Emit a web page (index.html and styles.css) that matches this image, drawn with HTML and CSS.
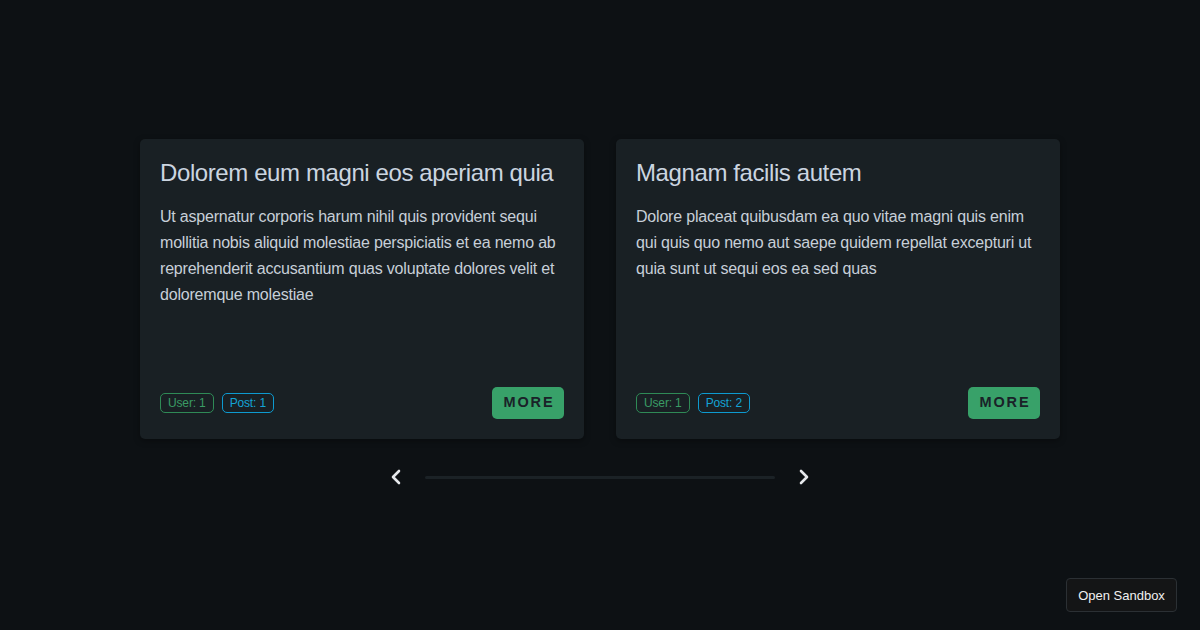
FILE: index.html
```html
<!DOCTYPE html>
<html>
<head>
<meta charset="utf-8">
<link rel="stylesheet" href="styles.css">
</head>
<body>
<main class="page">
  <div class="cards">
    <article class="card">
      <h2 class="card-title">Dolorem eum magni eos aperiam quia</h2>
      <p class="card-body">Ut aspernatur corporis harum nihil quis provident sequi mollitia nobis aliquid molestiae perspiciatis et ea nemo ab reprehenderit accusantium quas voluptate dolores velit et doloremque molestiae</p>
      <div class="card-footer">
        <div class="chips">
          <span class="chip chip-user">User: 1</span>
          <span class="chip chip-post">Post: 1</span>
        </div>
        <button class="more">MORE</button>
      </div>
    </article>
    <article class="card">
      <h2 class="card-title">Magnam facilis autem</h2>
      <p class="card-body">Dolore placeat quibusdam ea quo vitae magni quis enim qui quis quo nemo aut saepe quidem repellat excepturi ut quia sunt ut sequi eos ea sed quas</p>
      <div class="card-footer">
        <div class="chips">
          <span class="chip chip-user">User: 1</span>
          <span class="chip chip-post">Post: 2</span>
        </div>
        <button class="more">MORE</button>
      </div>
    </article>
  </div>
  <nav class="pager">
    <button class="arrow" aria-label="Previous">
      <svg width="24" height="24" viewBox="0 0 24 24"><path d="M15 6l-6 6 6 6" fill="none" stroke="#e6e9ec" stroke-width="2.6" stroke-linecap="round" stroke-linejoin="round"/></svg>
    </button>
    <div class="track"></div>
    <button class="arrow" aria-label="Next">
      <svg width="24" height="24" viewBox="0 0 24 24"><path d="M9 6l6 6-6 6" fill="none" stroke="#e6e9ec" stroke-width="2.6" stroke-linecap="round" stroke-linejoin="round"/></svg>
    </button>
  </nav>
</main>
<button class="sandbox">Open Sandbox</button>
</body>
</html>
```

FILE: styles.css
```css
html, body {
  margin: 0;
  padding: 0;
  background: #0d1114;
  font-family: "Liberation Sans", Arial, sans-serif;
}
.page {
  height: 630px;
  box-sizing: border-box;
  padding-top: 139px;
  display: flex;
  flex-direction: column;
  align-items: center;
}
.cards {
  display: flex;
  gap: 32px;
}
.card {
  width: 444px;
  height: 300px;
  box-sizing: border-box;
  background: #192024;
  border-radius: 5px;
  padding: 20px;
  display: flex;
  flex-direction: column;
  box-shadow: 0 2px 6px rgba(0,0,0,0.35);
}
.card-title {
  margin: 0;
  font-weight: 400;
  font-size: 24px;
  line-height: 28px;
  letter-spacing: -0.4px;
  color: #cbd5e0;
}
.card-body {
  margin: 17px 0 0;
  font-size: 16px;
  line-height: 26px;
  letter-spacing: -0.2px;
  color: #c7cfd8;
}
.card-footer {
  margin-top: auto;
  display: flex;
  align-items: center;
  justify-content: space-between;
}
.chips {
  display: flex;
  gap: 8px;
}
.chip {
  font-size: 12px;
  line-height: 18px;
  letter-spacing: -0.15px;
  padding: 0 7px;
  border-radius: 5px;
  border: 1px solid;
}
.chip-user {
  color: #3a9c65;
  border-color: #2f8a56;
}
.chip-post {
  color: #14a3d6;
  border-color: #0d9ad0;
}
.more {
  font-family: "Liberation Sans", Arial, sans-serif;
  background: #38a169;
  border: 0;
  border-radius: 5px;
  width: 72px;
  height: 32px;
  padding: 0 0 2px 2px;
  font-size: 14.5px;
  font-weight: 700;
  letter-spacing: 1.9px;
  color: #1a2228;
}
.pager {
  margin-top: 26px;
  display: flex;
  align-items: center;
  gap: 17px;
}
.arrow {
  background: none;
  border: 0;
  padding: 0;
  width: 24px;
  height: 24px;
  display: flex;
}
.track {
  width: 350px;
  height: 3px;
  border-radius: 2px;
  background: #1b2226;
}
.sandbox {
  position: fixed;
  right: 23px;
  bottom: 18px;
  width: 111px;
  height: 34px;
  background: #141516;
  border: 1px solid #2b3034;
  border-radius: 4px;
  color: #f0f0f0;
  font-family: "Liberation Sans", Arial, sans-serif;
  font-size: 13px;
  padding: 0;
}
```
